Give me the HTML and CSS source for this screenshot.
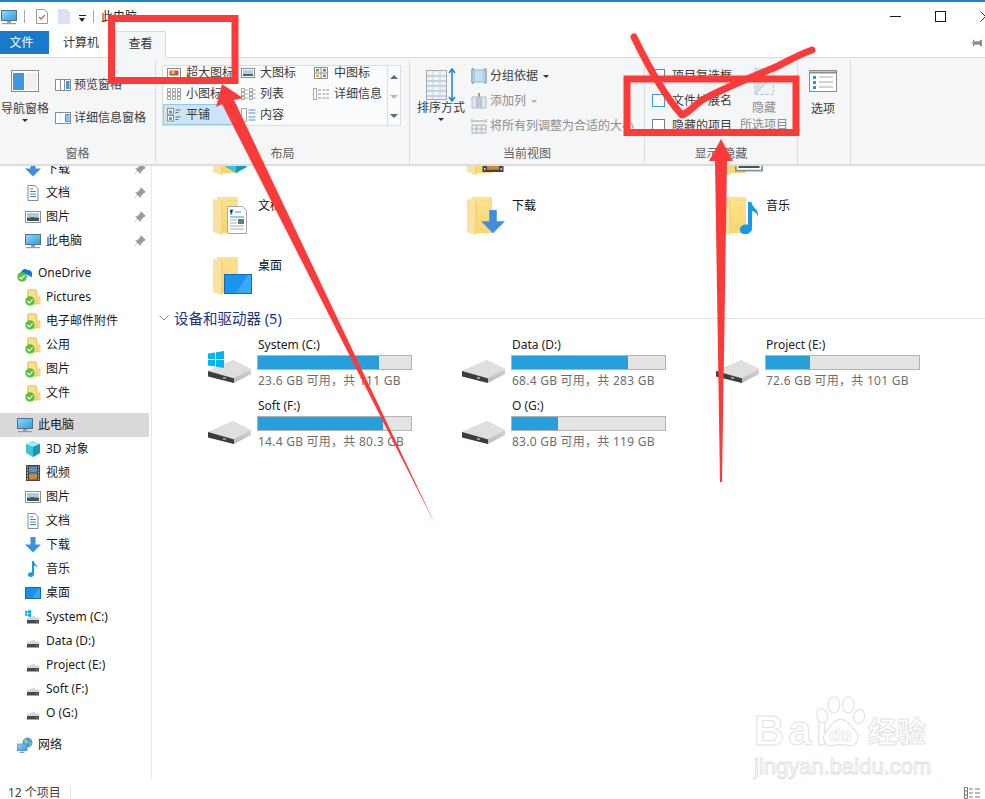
FILE: index.html
```html
<!DOCTYPE html>
<html lang="zh-CN">
<head>
    <meta charset="UTF-8">
    <meta name="viewport" content="width=device-width, initial-scale=1.0">
    <title>此电脑</title>
    <link rel="stylesheet" href="styles.css">
</head>
<body>
    <svg class="icon-defs" aria-hidden="true">
        <defs>
            <linearGradient id="g-screen" x1="0" y1="0" x2="1" y2="1"><stop offset="0" stop-color="#8fdcfb"/><stop offset="1" stop-color="#2a9be8"/></linearGradient>
            <linearGradient id="g-folder" x1="0" y1="0" x2="0" y2="1"><stop offset="0" stop-color="#fde28f"/><stop offset="1" stop-color="#fbd56f"/></linearGradient>
            <linearGradient id="g-drive" x1="0" y1="0" x2="0" y2="1"><stop offset="0" stop-color="#e6e6e8"/><stop offset="1" stop-color="#b8b8ba"/></linearGradient>
            <symbol id="pc" viewBox="0 0 16 16"><rect x="0.5" y="1.5" width="15" height="10" fill="url(#g-screen)" stroke="#5a6f80"/><rect x="6" y="12" width="4" height="2" fill="#8aa0b2"/><rect x="1" y="14" width="14" height="1.2" fill="#8aa0b2"/></symbol>
            <symbol id="doc" viewBox="0 0 16 16"><path d="M3 .5h7l3 3v12H3z" fill="#fff" stroke="#8a8a8a"/><path d="M5 4h3M5 6.5h6M5 9h6M5 11.500h6" stroke="#2f8fe0"/></symbol>
            <symbol id="pic" viewBox="0 0 16 16"><rect x=".5" y="2.500" width="15" height="11" fill="#fff" stroke="#8f8f8f"/><rect x="2" y="4" width="12" height="8" fill="#a9cde6"/><path d="M2 9l5-1 7 1v3H2z" fill="#3c5a4e"/></symbol>
            <symbol id="down" viewBox="0 0 16 16"><path d="M5.500 0h5v7.500H16L8 15.500 0 7.500h5.500z" fill="#3f8fdf"/></symbol>
            <symbol id="note" viewBox="0 0 16 16"><path d="M7 0h1.700c.3 3 4 3.500 3.300 7.500-.4-2-1.800-2.700-3-3V13c0 2-1.500 3-3.500 3S3 15 3 13.500 4.800 11 7 11.300z" fill="#149ae8"/></symbol>
            <symbol id="desk" viewBox="0 0 16 16"><rect x=".5" y="2.500" width="15" height="11" fill="#1a8fe8" stroke="#0f6db8"/><path d="M8 12l5-8h2v9H8z" fill="#35a6f0"/></symbol>
            <symbol id="cube" viewBox="0 0 16 16"><path d="M8 0l7 3v9l-7 4-7-4V3z" fill="#3fc3d8"/><path d="M8 0l7 3-7 3-7-3z" fill="#a5e9f2"/><path d="M8 6l7-3v9l-7 4z" fill="#119bb5"/></symbol>
            <symbol id="film" viewBox="0 0 16 16"><rect x="1" y="0" width="14" height="16" fill="#454545"/><rect x="4" y="1.500" width="8" height="6" fill="#5b8fc8"/><rect x="4" y="8.500" width="8" height="6" fill="#c98a3c"/><path d="M2 2h1M2 5h1M2 8h1M2 11h1M2 14h1M13 2h1M13 5h1M13 8h1M13 11h1M13 14h1" stroke="#fff"/></symbol>
            <symbol id="sdrive" viewBox="0 0 16 16"><path d="M2 9l6-2 6 2v2H2z" fill="#d6d6d8"/><rect x="2" y="11" width="12" height="3.500" fill="#4a4a4a"/><rect x="11" y="12" width="1.500" height="1" fill="#4ad04a"/></symbol>
            <symbol id="swin" viewBox="0 0 16 16"><path d="M2 9l6-2 6 2v2H2z" fill="#d6d6d8"/><rect x="2" y="11" width="12" height="3.500" fill="#4a4a4a"/><rect x="11" y="12" width="1.500" height="1" fill="#4ad04a"/><path d="M0 2l2.500-.5V4H0zM3 1.400L6 1v3H3zM0 4.500h2.500V7L0 6.600zM3 4.500h3V8l-3-.6z" fill="#12a5ee"/></symbol>
            <symbol id="net" viewBox="0 0 16 16"><circle cx="10.500" cy="5.500" r="5" fill="#4d9fd8"/><path d="M7 2l3 1 1 3-3 1zM12 5l2 1-1 3z" fill="#9bd08a"/><rect x="0" y="7" width="10" height="6.500" fill="url(#g-screen)" stroke="#4d7ea6" stroke-width=".7"/><path d="M5 14v1.500M2.500 15.700h5" stroke="#6f8da6"/></symbol>
            <symbol id="cloud" viewBox="0 0 16 16"><path d="M1 12c-.5-3 1.500-4.500 3-4.500C5 4.500 8 3 10.500 5c2-.5 4.500 1 4.500 3.500V12z" fill="#0f78d4"/><path d="M3 12c1-3 4-3.500 6-3l6 3z" fill="#fff" opacity=".75"/></symbol>
            <symbol id="sfolder" viewBox="0 0 16 16"><path d="M3 1h8v7H3z" fill="#fde28f" stroke="#e8c14f" stroke-width=".6"/><path d="M12 8v7H3V1h8z" fill="#fbdf8a" stroke="#e8c14f"/><path d="M13 8h2v7h-2z" fill="#fde8a8" stroke="#e8c14f" stroke-width=".7"/></symbol>
            <symbol id="sync" viewBox="0 0 10 10"><circle cx="5" cy="5" r="4.700" fill="#56c23c"/><path d="M2.500 5l1.800 1.900 3.300-3.500" fill="none" stroke="#fff" stroke-width="1.300"/></symbol>
            <symbol id="pin" viewBox="0 0 12 12"><path d="M7 .5l4.500 4.500-1.500.7-3 3-.5 2-5-5 2-.5 3-3zM3 8l-2.500 3.500" fill="#9a9a9a" stroke="#9a9a9a" stroke-width=".5"/></symbol>
            <symbol id="bigfolder" viewBox="0 0 48 48"><path d="M10 4h21v36H10z" fill="url(#g-folder)"/><path d="M6 6l9 2v34l-9-3z" fill="#fae29e"/><path d="M15 8l16-.5V8H15z" fill="#e8c468"/><path d="M15 8v34" stroke="#eecb71"/></symbol>
            <symbol id="bigdrive" viewBox="0 0 48 48"><path d="M1 33L26 22l18 9v5L27 45 1 38z" fill="url(#g-drive)"/><path d="M1 33L26 22l18 9-17 9z" fill="#dfdfe1"/><path d="M1 33l26 7.500V45L1 38.500z" fill="#3d3d3d"/><rect x="16" y="39" width="3" height="2" fill="#3fd13f"/></symbol>
        </defs>
    </svg>

    <div class="window">
        <div class="titlebar">
            <svg class="tb-pc"><use href="#pc"/></svg>
            <span class="tb-sep"></span>
            <svg class="tb-doc" viewBox="0 0 12 15"><path d="M.5.500h8l3 3v11H.5z" fill="#fff" stroke="#9a9a9a"/><path d="M3 8l2 2 4-4" fill="none" stroke="#e0602a" stroke-width="1.300"/></svg>
            <svg class="tb-blank" viewBox="0 0 12 15"><path d="M0 0h9l3 3v12H0z" fill="#d9e2f0"/></svg>
            <span class="tb-drop"></span>
            <span class="tb-sep"></span>
            <span class="tb-title">此电脑</span>
            <div class="win-controls">
                <span class="win-min"></span>
                <span class="win-max"></span>
                <svg class="win-close" viewBox="0 0 12 12"><path d="M.5.500l11 11M11.500.500l-11 11" stroke="#1a1a1a"/></svg>
            </div>
        </div>

        <div class="tabs">
            <span class="tab tab-file">文件</span>
            <span class="tab tab-plain">计算机</span>
            <span class="tab tab-active">查看</span>
            <svg class="tab-pin" viewBox="0 0 12 8"><path d="M0 4h3M3 1v6h1V5.500h6V7h2V1h-2v1.500H4V1z" fill="#8a8a8a" stroke="#8a8a8a" stroke-width=".4"/></svg>
        </div>

        <div class="ribbon">
            <section class="group group-pane">
                <div class="group-body">
                    <div class="big-btn btn-nav">
                        <svg class="big-icon" width="28" height="22" viewBox="0 0 28 22"><rect x=".5" y=".5" width="27" height="21" fill="#fff" stroke="#8c8c8c"/><rect x="2" y="3" width="11" height="17" fill="#3f97e3"/><rect x="14" y="3" width="12" height="17" fill="#f0f0f0"/></svg>
                        <span>导航窗格</span>
                        <i class="caret"></i>
                    </div>
                    <div class="pane-stack">
                        <div class="row"><svg class="pane-icon" viewBox="0 0 16 12"><rect x=".5" y=".5" width="15" height="11" fill="#fff" stroke="#8c8c8c"/><rect x="11" y="2" width="3.500" height="8" fill="#3f97e3"/><path d="M5.500 1v10M9.500 1v10" stroke="#8c8c8c"/></svg>预览窗格</div>
                        <div class="row"><svg class="pane-icon" viewBox="0 0 16 12"><rect x=".5" y=".5" width="15" height="11" fill="#fff" stroke="#8c8c8c"/><rect x="10" y="2" width="4.500" height="8" fill="#3f97e3"/><path d="M5.500 1v10M11 4h3M11 6h3M11 8h3" stroke="#d7ebfb"/></svg>详细信息窗格</div>
                    </div>
                </div>
                <div class="group-label">窗格</div>
            </section>

            <section class="group group-layout">
                <div class="group-body">
                    <div class="gallery">
                        <div class="gallery-grid">
                            <div class="gal-item"><svg class="gal-icon" viewBox="0 0 16 12"><rect x="1.500" y="1.500" width="13" height="9" fill="#fff" stroke="#8c8c8c"/><rect x="3.500" y="3.500" width="9" height="5" fill="#b9593a"/><rect x="5" y="4" width="4" height="3" fill="#e0b83c"/></svg>超大图标</div>
                            <div class="gal-item"><svg class="gal-icon" viewBox="0 0 16 12"><rect x="1.500" y="1.500" width="13" height="9" fill="#fff" stroke="#8c8c8c"/><rect x="3" y="3" width="10" height="6" fill="#b3d1e6"/><path d="M3 7h10v2H3z" fill="#3c6a4e"/></svg>大图标</div>
                            <div class="gal-item col-3"><svg class="gal-icon" viewBox="0 0 16 14"><path d="M1.500 1.500h13v11h-13zM8 1.500v11M1.500 7h13" fill="#fff" stroke="#8c8c8c"/><path d="M3 3h3v2.500H3z" fill="#6b9e5a"/><path d="M10 3h3v2.500h-3z" fill="#c9573a"/><path d="M3 8.500h3V11H3z" fill="#e0b83c"/><path d="M10 8.500h3V11h-3z" fill="#5b8fc8"/></svg>中图标</div>
                            <div class="gal-item"><svg class="gal-icon" viewBox="0 0 16 14"><path d="M1.500 1.500h3v3h-3zM6.500 1.500h3v3h-3zM11.500 1.500h3v3h-3zM1.500 5.500h3v3h-3zM6.500 5.500h3v3h-3zM11.500 5.500h3v3h-3zM1.500 9.500h3v3h-3zM6.500 9.500h3v3h-3zM11.500 9.500h3v3h-3z" fill="#fff" stroke="#8c8c8c" stroke-width=".8"/></svg>小图标</div>
                            <div class="gal-item"><svg class="gal-icon" viewBox="0 0 16 14"><path d="M1.500 1.500h3v3h-3zM1.500 5.500h3v3h-3zM1.500 9.500h3v3h-3zM9.500 1.500h3v3h-3zM9.500 5.500h3v3h-3zM9.500 9.500h3v3h-3z" fill="#fff" stroke="#8c8c8c" stroke-width=".8"/><path d="M5.500 3h2M5.500 7h2M5.500 11h2M13.500 3h2M13.500 7h2M13.500 11h2" stroke="#8c8c8c"/></svg>列表</div>
                            <div class="gal-item col-3"><svg class="gal-icon" viewBox="0 0 16 14"><path d="M.5 1.500h3v11h-3z" fill="#fff" stroke="#8c8c8c" stroke-width=".8"/><path d="M5 3h3M5 7h3M5 11h3M9.500 3h2.500M9.500 7h2.500M9.500 11h2.500M13 3h3M13 7h3M13 11h3" stroke="#8c8c8c"/></svg>详细信息</div>
                            <div class="gal-item is-selected"><svg class="gal-icon" viewBox="0 0 16 14"><rect x="1.500" y=".5" width="6" height="5.500" fill="#fff" stroke="#8c8c8c"/><rect x="1.500" y="7.500" width="6" height="5.500" fill="#fff" stroke="#8c8c8c"/><path d="M3 2.500h3V5H3z" fill="#5b8fc8"/><path d="M3 9h3v3H3z" fill="#8aa84a"/><path d="M9.500 2h5M9.500 4.500h3M9.500 9h5M9.500 11.500h3" stroke="#6f6f6f"/></svg>平铺</div>
                            <div class="gal-item"><svg class="gal-icon" viewBox="0 0 16 14"><path d="M1.500 .5h5v13h-5z" fill="#fff" stroke="#8c8c8c" stroke-width=".8"/><path d="M8.500 2h7M8.500 5h7M8.500 9h7M8.500 12h7" stroke="#5b8fc8"/></svg>内容</div>
                        </div>
                        <div class="gal-scroll">
                            <i class="scroll-up"></i>
                            <i class="scroll-down"></i>
                            <i class="scroll-more"></i>
                        </div>
                    </div>
                </div>
                <div class="group-label">布局</div>
            </section>

            <section class="group group-view">
                <div class="group-body">
                    <div class="big-btn btn-sort">
                        <svg class="big-icon" width="30" height="36" viewBox="0 0 30 36"><rect x=".5" y="3.500" width="20" height="29" fill="#eef3f8" stroke="#a8a8a8"/><path d="M1 9h19M1 14h19M1 19h19M1 24h19M1 29h19" stroke="#8fb7d6"/><path d="M7 4v28M14 4v28" stroke="#cfcfcf"/><path d="M26 3v30" stroke="#1f7fd0" stroke-width="1.500"/><path d="M23 6l3-4 3 4M23 30l3 4 3-4" fill="none" stroke="#1f7fd0" stroke-width="1.500"/></svg>
                        <span>排序方式</span>
                        <i class="caret"></i>
                    </div>
                    <div class="view-stack">
                        <div class="row"><svg class="view-icon" viewBox="0 0 16 16"><path d="M3 1H1v14h2M13 1h2v14h-2" fill="none" stroke="#6f6f6f"/><rect x="3" y="2" width="10" height="12" fill="#bfe1f8" stroke="#7db8e0"/></svg>分组依据<i class="caret caret-side"></i></div>
                        <div class="row row-muted"><svg class="view-icon" viewBox="0 0 16 16"><path d="M1 4h14v11H1zM5.500 4v11M10.500 4v11" fill="#e3e8ee" stroke="#b5bcc4"/><rect x="6" y="4" width="4" height="11" fill="#b9cde0"/><path d="M8 0v4" stroke="#a0a0a0" stroke-width="2"/></svg>添加列<i class="caret caret-side caret-muted"></i></div>
                        <div class="row row-muted"><svg class="view-icon" viewBox="0 0 16 16"><path d="M1 7h14v8H1zM1 11h14M5.500 7v8M10.500 7v8" fill="#eef1f4" stroke="#a9b2bb"/><path d="M1 1v4M15 1v4M2 3h12" stroke="#a0a0a0"/></svg>将所有列调整为合适的大小</div>
                    </div>
                </div>
                <div class="group-label">当前视图</div>
            </section>

            <section class="group group-show">
                <div class="group-body">
                    <div class="check-stack">
                        <label class="row"><span class="box"></span>项目复选框</label>
                        <label class="row"><span class="box box-hover"></span>文件扩展名</label>
                        <label class="row"><span class="box"></span>隐藏的项目</label>
                    </div>
                    <div class="hide-btn">
                        <svg class="big-icon" width="20" height="27" viewBox="0 0 20 27"><path d="M.5 .5h19v26H.5z" fill="#eef3f8" stroke="#a9bfd4" stroke-dasharray="3 2"/><path d="M.5 .5h19L.5 26.500z" fill="#d4e3f1"/><path d="M1 26L19 7" stroke="#9ab4cc"/></svg>
                        <span>隐藏</span>
                        <span class="hide-sub">所选项目</span>
                    </div>
                </div>
                <div class="group-label">显示/隐藏</div>
            </section>

            <section class="group group-opts">
                <div class="group-body">
                    <div class="big-btn btn-opts">
                        <svg class="big-icon" width="28" height="22" viewBox="0 0 28 22"><rect x=".5" y=".5" width="27" height="21" fill="#fff" stroke="#8c8c8c"/><path d="M1 2.500h26" stroke="#8c8c8c" stroke-width="2"/><path d="M10 7h14M10 12h14M10 17h14" stroke="#a8a8a8"/><path d="M4 6h3v3H4zM4 11h3v3H4zM4 16h3v3H4z" fill="#2f8fe0"/></svg>
                        <span>选项</span>
                    </div>
                </div>
                <div class="group-label"></div>
            </section>
        </div>

        <div class="main">
            <nav class="sidebar">
                <ul class="nav-group nav-quick">
                    <li class="nav-sub"><svg class="nav-icon"><use href="#down"/></svg>下载<svg class="nav-pin"><use href="#pin"/></svg></li>
                    <li class="nav-sub"><svg class="nav-icon"><use href="#doc"/></svg>文档<svg class="nav-pin"><use href="#pin"/></svg></li>
                    <li class="nav-sub"><svg class="nav-icon"><use href="#pic"/></svg>图片<svg class="nav-pin"><use href="#pin"/></svg></li>
                    <li class="nav-sub"><svg class="nav-icon"><use href="#pc"/></svg>此电脑<svg class="nav-pin"><use href="#pin"/></svg></li>
                </ul>
                <ul class="nav-group">
                    <li class="nav-top"><span class="nav-stack"><svg class="nav-icon"><use href="#cloud"/></svg><svg class="sync"><use href="#sync"/></svg></span>OneDrive</li>
                    <li class="nav-sub"><span class="nav-stack"><svg class="nav-icon"><use href="#sfolder"/></svg><svg class="sync"><use href="#sync"/></svg></span>Pictures</li>
                    <li class="nav-sub"><span class="nav-stack"><svg class="nav-icon"><use href="#sfolder"/></svg><svg class="sync"><use href="#sync"/></svg></span>电子邮件附件</li>
                    <li class="nav-sub"><span class="nav-stack"><svg class="nav-icon"><use href="#sfolder"/></svg><svg class="sync"><use href="#sync"/></svg></span>公用</li>
                    <li class="nav-sub"><span class="nav-stack"><svg class="nav-icon"><use href="#sfolder"/></svg><svg class="sync"><use href="#sync"/></svg></span>图片</li>
                    <li class="nav-sub"><span class="nav-stack"><svg class="nav-icon"><use href="#sfolder"/></svg><svg class="sync"><use href="#sync"/></svg></span>文件</li>
                </ul>
                <ul class="nav-group">
                    <li class="nav-top is-current"><svg class="nav-icon"><use href="#pc"/></svg>此电脑</li>
                    <li class="nav-sub"><svg class="nav-icon"><use href="#cube"/></svg>3D 对象</li>
                    <li class="nav-sub"><svg class="nav-icon"><use href="#film"/></svg>视频</li>
                    <li class="nav-sub"><svg class="nav-icon"><use href="#pic"/></svg>图片</li>
                    <li class="nav-sub"><svg class="nav-icon"><use href="#doc"/></svg>文档</li>
                    <li class="nav-sub"><svg class="nav-icon"><use href="#down"/></svg>下载</li>
                    <li class="nav-sub"><svg class="nav-icon"><use href="#note"/></svg>音乐</li>
                    <li class="nav-sub"><svg class="nav-icon"><use href="#desk"/></svg>桌面</li>
                    <li class="nav-sub"><svg class="nav-icon"><use href="#swin"/></svg>System (C:)</li>
                    <li class="nav-sub"><svg class="nav-icon"><use href="#sdrive"/></svg>Data (D:)</li>
                    <li class="nav-sub"><svg class="nav-icon"><use href="#sdrive"/></svg>Project (E:)</li>
                    <li class="nav-sub"><svg class="nav-icon"><use href="#sdrive"/></svg>Soft (F:)</li>
                    <li class="nav-sub"><svg class="nav-icon"><use href="#sdrive"/></svg>O (G:)</li>
                </ul>
                <ul class="nav-group">
                    <li class="nav-top"><svg class="nav-icon"><use href="#net"/></svg>网络</li>
                </ul>
            </nav>

            <div class="content">
                <div class="folders">
                    <div class="tile"><span class="tile-icon"><svg class="big48"><use href="#bigfolder"/></svg><svg class="over over-cube"><use href="#cube"/></svg></span></div>
                    <div class="tile"><span class="tile-icon"><svg class="big48"><use href="#bigfolder"/></svg><svg class="over over-film"><use href="#film"/></svg></span></div>
                    <div class="tile"><span class="tile-icon"><svg class="big48"><use href="#bigfolder"/></svg><svg class="over over-pic"><use href="#pic"/></svg></span></div>
                    <div class="tile"><span class="tile-icon"><svg class="big48"><use href="#bigfolder"/></svg><svg class="over over-doc" viewBox="0 0 20 28"><path d="M.5.500h15l4 4v23H.5z" fill="#fff" stroke="#a8a8a8"/><path d="M3 4h3l-2 5M8 6h6M3 11h14" stroke="#2f8fe0"/><path d="M3 14h7M3 17h7M3 20h14M3 23h14" stroke="#a8a8a8"/><rect x="11" y="13" width="6" height="5" fill="#5d7f86"/></svg></span><span class="tile-name">文档</span></div>
                    <div class="tile"><span class="tile-icon"><svg class="big48"><use href="#bigfolder"/></svg><svg class="over over-down"><use href="#down"/></svg></span><span class="tile-name">下载</span></div>
                    <div class="tile"><span class="tile-icon"><svg class="big48"><use href="#bigfolder"/></svg><svg class="over over-note"><use href="#note"/></svg></span><span class="tile-name">音乐</span></div>
                    <div class="tile"><span class="tile-icon"><svg class="big48"><use href="#bigfolder"/></svg><svg class="over over-desk" viewBox="0 0 28 20" preserveAspectRatio="none"><rect x=".5" y=".5" width="27" height="19" fill="#1a94ee" stroke="#0f6db8"/><path d="M12 19L24 1h3v18z" fill="#38aaf4"/></svg></span><span class="tile-name">桌面</span></div>
                </div>

                <div class="section-head">
                    <svg class="chevron" viewBox="0 0 10 6"><path d="M.5.500L5 5 9.500.500" fill="none" stroke="#8a8a8a"/></svg>
                    <span class="section-title">设备和驱动器 (5)</span>
                    <span class="section-line"></span>
                </div>

                <div class="drives">
                    <div class="drive"><span class="tile-icon"><svg class="big48"><use href="#bigdrive"/></svg><svg class="over over-win" viewBox="0 0 16 17"><path d="M0 2.500L7 1.500V8H0zM8 1.300L16 0v8H8zM0 9h7v6.500L0 14.500zM8 9h8v8l-8-1.300z" fill="#08b4f0"/></svg></span>
                        <div class="drive-info"><div class="drive-name">System (C:)</div><div class="bar"><div class="bar-fill" style="width:79%"></div></div><div class="drive-free">23.6 GB 可用，共 111 GB</div></div></div>
                    <div class="drive"><span class="tile-icon"><svg class="big48"><use href="#bigdrive"/></svg></span>
                        <div class="drive-info"><div class="drive-name">Data (D:)</div><div class="bar"><div class="bar-fill" style="width:76%"></div></div><div class="drive-free">68.4 GB 可用，共 283 GB</div></div></div>
                    <div class="drive"><span class="tile-icon"><svg class="big48"><use href="#bigdrive"/></svg></span>
                        <div class="drive-info"><div class="drive-name">Project (E:)</div><div class="bar"><div class="bar-fill" style="width:29%"></div></div><div class="drive-free">72.6 GB 可用，共 101 GB</div></div></div>
                    <div class="drive"><span class="tile-icon"><svg class="big48"><use href="#bigdrive"/></svg></span>
                        <div class="drive-info"><div class="drive-name">Soft (F:)</div><div class="bar"><div class="bar-fill" style="width:82%"></div></div><div class="drive-free">14.4 GB 可用，共 80.3 GB</div></div></div>
                    <div class="drive"><span class="tile-icon"><svg class="big48"><use href="#bigdrive"/></svg></span>
                        <div class="drive-info"><div class="drive-name">O (G:)</div><div class="bar"><div class="bar-fill" style="width:30%"></div></div><div class="drive-free">83.0 GB 可用，共 119 GB</div></div></div>
                </div>
            </div>
        </div>

        <div class="statusbar">
            <span class="status-count">12 个项目</span>
            <span class="status-sep"></span>
            <svg class="status-view" viewBox="0 0 16 12"><path d="M.5.500h3v11h-3zM.5 4h3M.5 8h3" fill="#fff" stroke="#777"/><path d="M5 2h4M11 2h5M5 6h4M11 6h5M5 10h4M11 10h5" stroke="#777"/></svg>
        </div>
    </div>

    <!-- annotations drawn on top of the screenshot -->
    <svg class="marks" viewBox="0 0 985 799">
        <rect x="111.500" y="18.500" width="123.500" height="62" fill="none" stroke="#fb3a3a" stroke-width="7"/>
        <rect x="627" y="79" width="169" height="53.500" fill="none" stroke="#fb3a3a" stroke-width="7"/>
        <path d="M634 37C650 70 668 100 682 115C690 112 695 104 704 99C728 86 755 76 778 66C790 60 800 54 812 50" fill="none" stroke="#fb3a3a" stroke-width="7" stroke-linecap="round" stroke-linejoin="round"/>
        <polygon points="222,84 243,98 234,100 435,524 222,104 216,107" fill="#fb3a3a"/>
        <polygon points="721,139 733,161 727,161 722,482 720,482 715,161 709,161" fill="#fb3a3a"/>
    </svg>

    <div class="watermark">
        <div class="wm-top">
            <span class="wm-bai">Bai</span>
            <svg class="wm-paw" viewBox="0 0 60 58"><g fill="#fff" stroke="#e3e3e3" stroke-width="1.300"><ellipse cx="8" cy="22" rx="6" ry="8" transform="rotate(-15 8 22)"/><ellipse cx="21" cy="10" rx="6.500" ry="9"/><ellipse cx="37" cy="10" rx="6.500" ry="9"/><ellipse cx="49" cy="23" rx="6" ry="8" transform="rotate(15 49 23)"/><path d="M28 26c8 0 11 7 17 13 6 7 2 17-8 16-5-.5-11-2-16 0-9 2-15-7-9-15 6-6 8-14 16-14z"/></g><text class="wm-du" x="28" y="50">du</text></svg>
            <span class="wm-jy">经验</span>
        </div>
        <div class="wm-url">jingyan.baidu.com</div>
    </div>
</body>
</html>
```

FILE: styles.css
```css
* {
    box-sizing: border-box;
}

html, body {
    margin: 0;
    padding: 0;
    width: 985px;
    height: 799px;
    overflow: hidden;
    background-color: #fff;
}

body {
    position: relative;
    font-family: "Noto Sans", "Noto Sans CJK SC", sans-serif;
    font-size: 12px;
    line-height: 16px;
    color: #1a1a1a;
}

ul {
    list-style: none;
    margin: 0;
    padding: 0;
}

.icon-defs {
    position: absolute;
    width: 0;
    height: 0;
}

.window {
    display: flex;
    flex-direction: column;
    height: 799px;
    border-top: 2px solid #1b86d6;
}

/* title bar */
.titlebar {
    display: flex;
    align-items: center;
    height: 29px;
    flex-shrink: 0;
}

.tb-pc {
    width: 16px;
    height: 16px;
    margin-left: 1px;
}

.tb-sep {
    width: 1px;
    height: 13px;
    background-color: #a8a8a8;
}

.titlebar .tb-sep:nth-of-type(1) {
    margin-left: 7px;
}

.tb-doc {
    width: 12px;
    height: 15px;
    margin-left: 11px;
}

.tb-blank {
    width: 12px;
    height: 15px;
    margin-left: 10px;
}

.tb-drop {
    width: 7px;
    height: 6px;
    margin: 3px 7px 0 9px;
    border-top: 1px solid #222;
    position: relative;
}

.tb-drop::after {
    content: "";
    position: absolute;
    left: 0;
    top: 2px;
    border-left: 3.500px solid transparent;
    border-right: 3.500px solid transparent;
    border-top: 4px solid #222;
}

.tb-title {
    margin-left: 7px;
    color: #222;
}

.win-controls {
    margin-left: auto;
    display: flex;
    align-items: center;
    height: 100%;
}

.win-min {
    width: 11px;
    height: 1px;
    background-color: #1a1a1a;
    margin-right: 34px;
}

.win-max {
    width: 11px;
    height: 11px;
    border: 1px solid #1a1a1a;
    margin-right: 34px;
}

.win-close {
    width: 11px;
    height: 11px;
    margin-right: -6px;
}

/* tabs */
.tabs {
    display: flex;
    align-items: flex-start;
    height: 27px;
    flex-shrink: 0;
    border-bottom: 1px solid #dadbdc;
    position: relative;
}

.tab {
    display: block;
    text-align: center;
    line-height: 23px;
}

.tab-file {
    width: 49px;
    height: 23px;
    padding-right: 6px;
    background-color: #1979ca;
    color: #fff;
}

.tab-plain {
    width: 66px;
    padding-right: 2px;
    color: #333;
}

.tab-active {
    width: 51px;
    height: 27px;
    border: 1px solid #dadbdc;
    border-bottom: none;
    background-color: #f5f6f7;
    color: #333;
    position: relative;
    z-index: 1;
}

.tab-pin {
    width: 12px;
    height: 8px;
    margin: 8px 3px 0 auto;
}

/* ribbon */
.ribbon {
    display: flex;
    height: 108px;
    flex-shrink: 0;
    background-color: #f5f6f7;
    border-bottom: 2px solid #dcdddf;
    color: #3b3b3b;
}

.group {
    display: flex;
    flex-direction: column;
    height: 104px;
    margin-top: 2px;
    border-right: 1px solid #dcdddf;
    flex-shrink: 0;
}

.group-body {
    display: flex;
    height: 84px;
}

.group-label {
    height: 20px;
    line-height: 20px;
    text-align: center;
    color: #606060;
}

.group-pane { width: 156px; }
.group-layout { width: 254px; }
.group-view { width: 235px; }
.group-show { width: 153px; }
.group-opts { width: 53px; }

.big-btn {
    display: flex;
    flex-direction: column;
    align-items: center;
    padding-top: 10px;
    flex-shrink: 0;
}

.big-btn span {
    line-height: 14px;
    white-space: nowrap;
}

.big-icon {
    display: block;
}

.caret {
    display: block;
    width: 0;
    height: 0;
    margin-top: 3px;
    border-left: 3px solid transparent;
    border-right: 3px solid transparent;
    border-top: 3px solid #333;
}

.caret-side {
    margin: 1px 0 0 5px;
}

.caret-muted {
    border-top-color: #b0b0b0;
}

.row {
    display: flex;
    align-items: center;
    white-space: nowrap;
}

.row-muted {
    color: #8c8c8c;
}

.btn-nav {
    width: 50px;
}

.btn-nav .big-icon {
    height: 22px;
    margin-bottom: 10px;
}

.pane-stack {
    display: flex;
    flex-direction: column;
    gap: 13px;
    padding: 15px 0 0 5px;
}

.pane-stack .row {
    height: 20px;
}

.pane-icon {
    width: 16px;
    height: 12px;
    margin-right: 3px;
}

.gallery {
    display: flex;
    width: 239px;
    height: 61px;
    margin: 5px 0 0 6px;
    border: 1px solid #dcdddf;
    background-color: #fafbfc;
    overflow: hidden;
}

/* first row is scrolled partly out of the gallery box */
.gallery-grid {
    display: grid;
    grid-template-columns: 74px 74px 76px;
    grid-template-rows: 21px 21px 21px;
    width: 224px;
    height: 63px;
    margin-top: -4px;
}

.gal-item {
    display: flex;
    align-items: center;
    padding-left: 3px;
    white-space: nowrap;
}

.gal-item.col-3 {
    padding-left: 2px;
}

.gal-icon {
    width: 16px;
    height: 14px;
    margin-right: 4px;
    flex-shrink: 0;
}

.col-3 .gal-icon {
    margin-right: 5px;
}

.is-selected {
    background-color: #cce4f7;
    border: 1px solid #90c8f6;
    padding-left: 2px;
}

.gal-scroll {
    display: flex;
    flex-direction: column;
    align-items: center;
    justify-content: space-between;
    width: 13px;
    padding: 9px 0 7px;
    border-left: 1px solid #dcdddf;
}

.gal-scroll i {
    display: block;
    width: 0;
    height: 0;
    border-left: 4px solid transparent;
    border-right: 4px solid transparent;
}

.scroll-up { border-bottom: 4px solid #5a6b7a; }
.scroll-down { border-top: 4px solid #b8b8b8; }
.scroll-more { border-top: 4px solid #5a6b7a; }

.btn-sort {
    width: 62px;
    padding-left: 0;
    padding-top: 7px;
}

.btn-sort .big-icon {
    margin-bottom: -2px;
}

.view-stack,
.check-stack {
    display: flex;
    flex-direction: column;
    padding-top: 3px;
}

.view-stack .row,
.check-stack .row {
    height: 25px;
}

.view-stack {
    margin-left: -1px;
}

.view-icon {
    width: 16px;
    height: 16px;
    margin-right: 3px;
    flex-shrink: 0;
}

.check-stack {
    padding-left: 7px;
    width: 98px;
}

.box {
    width: 13px;
    height: 13px;
    margin-right: 7px;
    background-color: #fff;
    border: 1px solid #6e7f92;
}

.box-hover {
    border-color: #3399ff;
}

.hide-btn {
    display: flex;
    flex-direction: column;
    align-items: center;
    width: 42px;
    padding-top: 8px;
    color: #8c8c8c;
    white-space: nowrap;
}

.hide-btn span {
    line-height: 16px;
}

.hide-btn .big-icon {
    margin-bottom: 5px;
}

.hide-sub {
    margin-top: 1px;
}

.btn-opts {
    width: 50px;
}

.btn-opts .big-icon {
    margin-bottom: 10px;
}

/* left navigation */
.main {
    display: flex;
    flex: 1;
    min-height: 0;
    overflow: hidden;
}

.sidebar {
    width: 152px;
    flex-shrink: 0;
    border-right: 1px solid #e8e8e8;
    margin-top: 0;
}

.nav-quick {
    margin-top: -9px;
}

.nav-group {
    margin-bottom: 8px;
}

.nav-group li {
    display: flex;
    align-items: center;
    height: 24px;
    width: 149px;
    white-space: nowrap;
}

.nav-sub {
    padding-left: 25px;
}

.nav-top {
    padding-left: 17px;
}

.nav-icon {
    width: 16px;
    height: 16px;
    margin-right: 5px;
    flex-shrink: 0;
}

.nav-stack {
    position: relative;
    display: block;
    width: 21px;
    height: 16px;
    flex-shrink: 0;
}

.sync {
    position: absolute;
    left: 0;
    top: 7px;
    width: 10px;
    height: 10px;
}

.nav-pin {
    width: 12px;
    height: 12px;
    margin-left: auto;
    margin-right: 3px;
}

.is-current {
    background-color: #d9d9d9;
}

/* content pane */
.content {
    flex: 1;
    min-width: 0;
}

.folders {
    display: grid;
    grid-template-columns: repeat(3, 254px);
    grid-auto-rows: 60px;
    margin: -33px 0 0 55px;
}

.tile {
    display: flex;
    align-items: flex-start;
}

.tile-icon {
    position: relative;
    display: block;
    width: 48px;
    height: 48px;
    flex-shrink: 0;
}

.big48 {
    display: block;
    width: 48px;
    height: 48px;
}

.over {
    position: absolute;
}

.over-cube { left: 17px; top: 16px; width: 24px; height: 24px; }
.over-film { left: 20px; top: 14px; width: 24px; height: 26px; }
.over-pic { left: 20px; top: 14px; width: 28px; height: 28px; }
.over-doc { left: 20px; top: 13px; width: 20px; height: 28px; }
.over-down { left: 20px; top: 17px; width: 24px; height: 24px; }
.over-note { left: 19px; top: 9px; width: 32px; height: 32px; }
.over-desk { left: 17px; top: 21px; width: 28px; height: 20px; }
.over-win { left: 1px; top: 13px; width: 16px; height: 17px; }

.tile-name {
    margin: 5px 0 0 3px;
    color: #111;
}

.section-head {
    display: flex;
    align-items: center;
    height: 22px;
    margin-top: -6px;
    padding-left: 7px;
}

.chevron {
    width: 10px;
    height: 6px;
}

.section-title {
    margin-left: 5px;
    font-size: 14.500px;
    color: #1e3287;
    white-space: nowrap;
}

.section-line {
    flex: 1;
    height: 1px;
    margin-left: 7px;
    background-color: #e2e2e2;
}

.drives {
    display: grid;
    grid-template-columns: repeat(3, 254px);
    grid-auto-rows: 61px;
    margin: 9px 0 0 55px;
}

.drive {
    display: flex;
}

.drive-info {
    width: 155px;
    margin-left: 2px;
}

.drive-name {
    height: 14px;
    line-height: 14px;
    margin-left: 1px;
    color: #222;
}

.bar {
    height: 15px;
    margin-top: 3px;
    border: 1px solid #b3b3b3;
    background-color: #e4e4e4;
}

.bar-fill {
    height: 100%;
    background-color: #26a0da;
}

.drive-free {
    margin: 3px 0 0 1px;
    color: #6d6d6d;
    letter-spacing: .25px;
    white-space: nowrap;
}

/* status bar */
.statusbar {
    display: flex;
    align-items: center;
    height: 19px;
    flex-shrink: 0;
    padding: 6px 5px 0 8px;
    color: #444;
}

.status-sep {
    width: 1px;
    height: 13px;
    margin-left: 9px;
    background-color: #e4e4e4;
}

.status-view {
    width: 16px;
    height: 12px;
    margin-left: auto;
}

/* annotations and watermark sit over the window */
.marks {
    position: absolute;
    left: 0;
    top: 0;
    width: 985px;
    height: 799px;
}

.watermark {
    position: absolute;
    left: 754px;
    top: 693px;
    width: 180px;
    color: #fff;
    -webkit-text-stroke: 1px #e2e2e2;
    font-family: "Liberation Sans", "Noto Sans CJK SC", sans-serif;
}

.wm-top {
    display: flex;
    align-items: flex-end;
    height: 58px;
}

.wm-bai {
    width: 61px;
    font-size: 42px;
    line-height: 46px;
    font-weight: 700;
    letter-spacing: 4px;
    margin-bottom: -3px;
}

.wm-paw {
    width: 54px;
    height: 58px;
}

.wm-du {
    font-size: 20px;
    font-weight: 700;
    text-anchor: middle;
    fill: #fff;
    stroke: #e2e2e2;
    stroke-width: .8px;
    -webkit-text-stroke: 0;
}

.wm-jy {
    font-size: 29px;
    line-height: 36px;
    font-weight: 700;
    margin-left: -1px;
    white-space: nowrap;
}

.wm-url {
    font-size: 22px;
    line-height: 26px;
    margin-top: 3px;
    white-space: nowrap;
}
```
